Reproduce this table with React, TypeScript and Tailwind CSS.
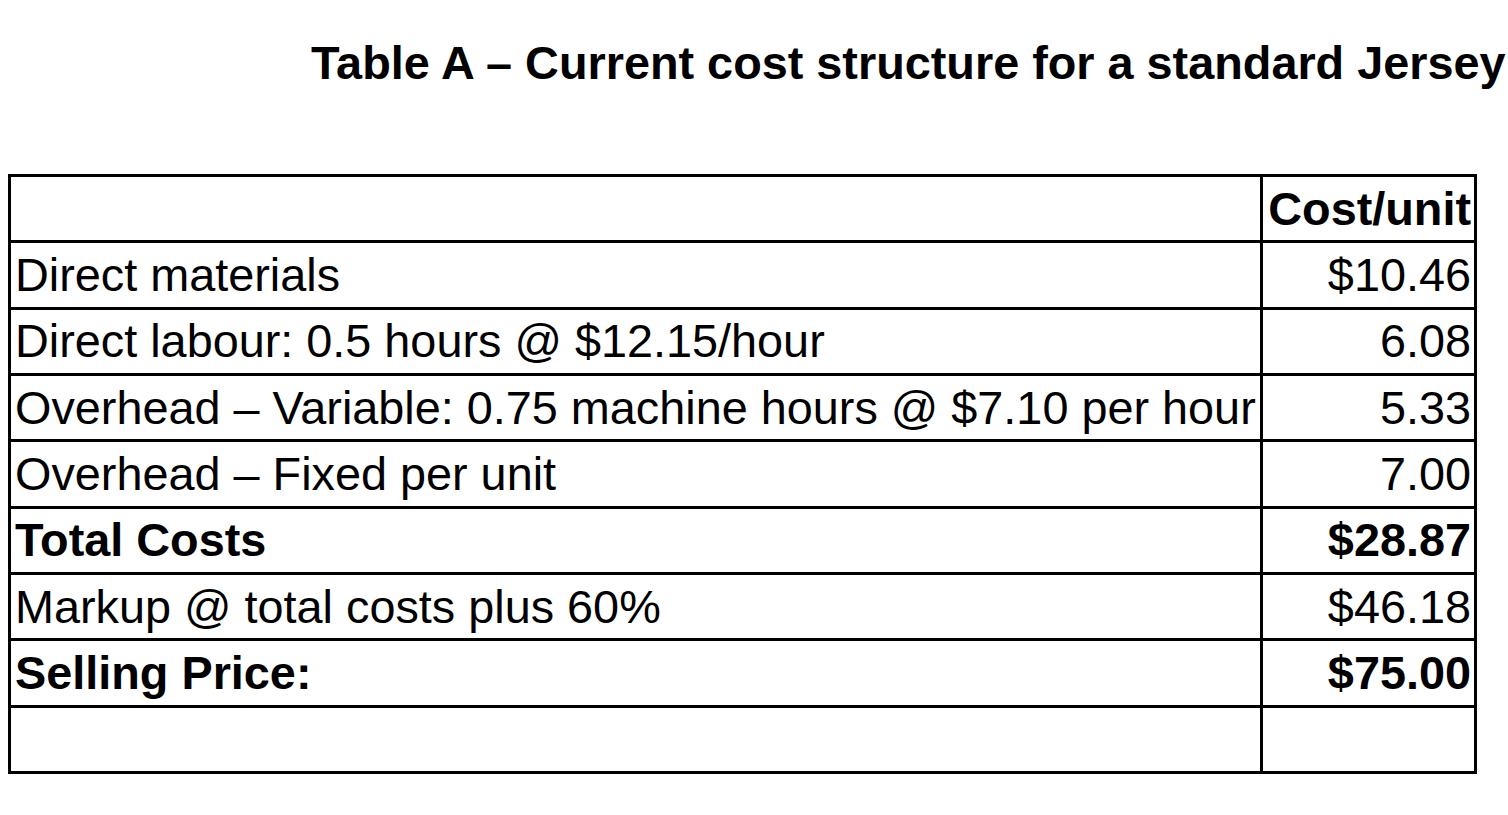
const rows: { label: string; value: string; bold?: boolean }[] = [
  { label: '', value: 'Cost/unit', bold: true },
  { label: 'Direct materials', value: '$10.46' },
  { label: 'Direct labour: 0.5 hours @ $12.15/hour', value: '6.08' },
  { label: 'Overhead – Variable: 0.75 machine hours @ $7.10 per hour', value: '5.33' },
  { label: 'Overhead – Fixed per unit', value: '7.00' },
  { label: 'Total Costs', value: '$28.87', bold: true },
  { label: 'Markup @ total costs plus 60%', value: '$46.18' },
  { label: 'Selling Price:', value: '$75.00', bold: true },
  { label: '', value: '' },
]

export default function App() {
  return (
    <main
      className="h-[815px] w-[1508px] overflow-hidden bg-white text-black"
      style={{ fontFamily: '"Liberation Sans", Arial, sans-serif' }}
    >
      <h1 className="whitespace-nowrap pl-[311px] pt-[40px] text-[46.8px] font-bold leading-none">
        Table A – Current cost structure for a standard Jersey
      </h1>

      <div className="ml-[8px] mt-[87.2px] w-[1469px] border-l-[3px] border-t-[3px] border-black">
        {rows.map((r, i) => (
          <div key={i} className="flex h-[66.33px] text-[46.8px]">
            <div
              className={`flex w-[1252px] items-center whitespace-nowrap border-b-[3px] border-r-[3px] border-black pl-[4px] ${
                r.bold ? 'font-bold' : ''
              }`}
            >
              {r.label}
            </div>
            <div
              className={`flex w-[214px] items-center justify-end whitespace-nowrap border-b-[3px] border-r-[3px] border-black pr-[3px] ${
                r.bold ? 'font-bold' : ''
              }`}
            >
              {r.value}
            </div>
          </div>
        ))}
      </div>
    </main>
  )
}
